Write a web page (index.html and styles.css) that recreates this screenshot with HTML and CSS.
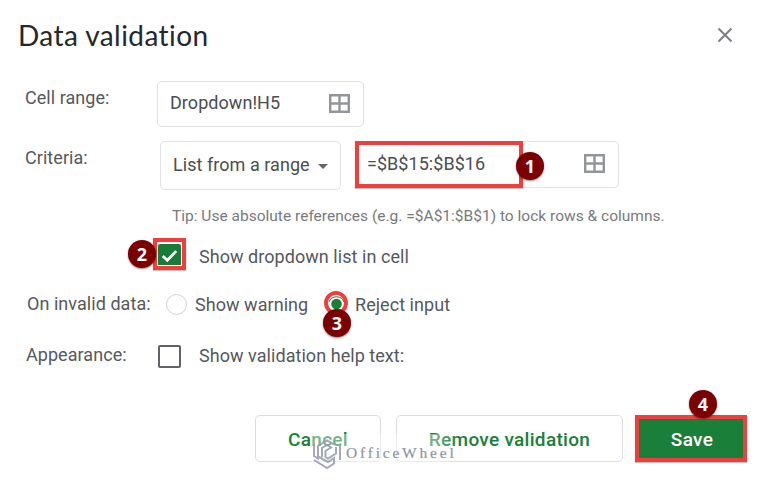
FILE: index.html
```html
<!DOCTYPE html>
<html lang="en">
<head>
<meta charset="utf-8">
<title>Data validation</title>
<link rel="stylesheet" href="styles.css">
</head>
<body>
<main class="dialog">
  <header class="header">
    <h1 class="title">Data validation</h1>
    <svg class="close" viewBox="0 0 16 16"><path d="M1.5 1.5 14.5 14.5M14.5 1.5 1.5 14.5"/></svg>
  </header>

  <section class="row row-range">
    <span class="label label-range">Cell range:</span>
    <div class="field field-range">
      <span class="text-range">Dropdown!H5</span>
      <svg class="grid-icon" viewBox="0 0 21 19"><path d="M1.2 1.2H19.8V17.8H1.2ZM10.5 1V18M1 9.5H20"/></svg>
    </div>
  </section>

  <section class="row row-criteria">
    <span class="label label-criteria">Criteria:</span>
    <div class="field field-select">
      <span class="text-select">List from a range</span>
      <svg class="caret" viewBox="0 0 10 5"><path d="M0 0H10L5 5Z"/></svg>
    </div>
    <div class="field field-formula">
      <span class="text-formula">=$B$15:$B$16</span>
      <svg class="grid-icon" viewBox="0 0 21 19"><path d="M1.2 1.2H19.8V17.8H1.2ZM10.5 1V18M1 9.5H20"/></svg>
      <span class="outline outline-formula"></span>
      <span class="badge badge-1">1</span>
    </div>
  </section>

  <p class="tip">Tip: Use absolute references (e.g. =$A$1:$B$1) to lock rows &amp; columns.</p>

  <section class="row row-show">
    <div class="check-frame">
      <svg class="check" viewBox="0 0 24 20"><path d="M5 11.5 9.7 16 19 6.5"/></svg>
      <span class="badge badge-2">2</span>
    </div>
    <span class="text-show">Show dropdown list in cell</span>
  </section>

  <section class="row row-invalid">
    <span class="label label-invalid">On invalid data:</span>
    <span class="radio"></span>
    <span class="text-warning">Show warning</span>
    <span class="radio-selected">
      <svg viewBox="0 0 24 24"><circle class="halo" cx="12" cy="12" r="10"/><path class="ring" d="M5 11A8 8 0 0 1 20 11"/><circle class="dot" cx="12.5" cy="13" r="5.3"/></svg>
      <span class="badge badge-3">3</span>
    </span>
    <span class="text-reject">Reject input</span>
  </section>

  <section class="row row-appearance">
    <span class="label label-appearance">Appearance:</span>
    <span class="box"></span>
    <span class="text-help">Show validation help text:</span>
  </section>

  <footer class="actions">
    <div class="button cancel"><span class="text-cancel">Cancel</span></div>
    <div class="button remove"><span class="text-remove">Remove validation</span></div>
    <div class="button save"><span class="text-save">Save</span><span class="badge badge-4">4</span></div>
    <div class="watermark">
      <svg viewBox="0 0 30 34"><path d="M2 9V21L6 23.5V11L15 5.5 23 10M10 22V13L15 10 19 12.5 13.5 16V22L16 23.5 24 18.5V12M28 10V25M2 25 15 33 22 28.5V23L16 27 6 21.5"/></svg>
      <span class="text-brand">OfficeWheel</span>
    </div>
  </footer>
</main>
</body>
</html>
```

FILE: styles.css
```css
* { box-sizing: border-box; }
body { margin: 0; background: #fff; }
.dialog {
  width: 767px;
  height: 491px;
  overflow: hidden;
  font-family: Roboto, sans-serif;
  font-size: 18px;
  line-height: 22px;
  letter-spacing: 0.05px;
  color: #55585c;
  white-space: nowrap;
}
.header {
  display: flex;
  justify-content: space-between;
  height: 81px;
  padding: 17px 34px 0 18px;
}
.title {
  margin: 0;
  font: 400 28px/36px Lato, sans-serif;
  letter-spacing: 0.42px;
  color: #24272b;
}
.close { width: 16px; height: 16px; margin-top: 10px; fill: none; stroke: #7b7e83; stroke-width: 2; }
.row { display: flex; }
.label { flex: none; }
.field {
  display: flex;
  flex: none;
  position: relative;
  align-items: center;
  justify-content: space-between;
  border: 1.5px solid #dfe1e5;
  border-radius: 5px;
  color: #4a4d51;
}
.grid-icon { width: 21px; height: 19px; fill: none; stroke: #929599; stroke-width: 2.4; }

.row-range { height: 60px; padding-left: 25px; }
.label-range { width: 132px; padding-top: 6px; }
.field-range { width: 207px; height: 46px; padding: 0 13px 2px 12px; }

.row-criteria { height: 64px; padding-left: 25px; }
.label-criteria { width: 135px; padding-top: 6px; }
.field-select { width: 181px; height: 49px; margin-right: 14px; padding: 0 12px 2px; }
.caret { width: 10px; height: 5px; margin-top: 3px; fill: #606368; }
.field-formula { width: 264px; height: 47px; padding: 0 13px 2px 11px; }
.outline-formula { position: absolute; left: -1px; top: -1px; width: 168px; height: 47px; border: 4px solid #ef3e3d; box-shadow: 0 1px 1px #8888; }

.badge {
  position: absolute;
  z-index: 2;
  width: 28px;
  height: 28px;
  border-radius: 50%;
  background: #7b0000;
  box-shadow: 0 1px 2px #0007;
  color: #fff;
  font: 700 18px/28px "Open Sans", sans-serif;
  letter-spacing: 0;
  text-align: center;
}
.badge-1 { left: 160px; top: 10px; }
.badge-2 { left: -29px; top: -2px; }
.badge-3 { left: 0; top: 20px; }
.badge-4 { left: 50px; top: -29px; }

.tip { height: 33px; margin: 0; padding: 1px 0 0 172px; font-size: 15.5px; line-height: 20px; letter-spacing: 0.01px; color: #77797d; }

.row-show { height: 51px; padding-left: 153px; }
.check-frame { position: relative; width: 33px; height: 32px; margin-right: 13px; padding: 2px 1px 0; border: 4px solid #ef3e3d; box-shadow: 0 1px 1px #8888; }
.check { display: block; width: 23px; height: 21px; border-radius: 2px 2px 0 0; background: #187b38; fill: none; stroke: #fff; stroke-width: 2.8; }
.text-show { padding-top: 8px; }

.row-invalid { height: 55px; padding-left: 27px; }
.label-invalid { width: 139px; padding-top: 4px; }
.radio { width: 21px; height: 21px; margin: 5px 8px 0 0; border: 1.5px solid #cfd1d4; border-radius: 50%; }
.text-warning { width: 128px; padding-top: 5px; }
.radio-selected { position: relative; width: 32px; }
.radio-selected svg { display: block; width: 24px; height: 24px; margin: 2px 0 0 1px; fill: none; }
.halo { stroke: #ef3e3d; stroke-width: 4; }
.ring { stroke: #34704a; stroke-width: 1; }
.dot { fill: #188038; }
.text-reject { padding-top: 5px; }

.row-appearance { height: 71px; padding-left: 26px; }
.label-appearance { width: 132px; }
.box { width: 23px; height: 23px; margin: 1px 18px 0 0; border: 2.5px solid #5f6368; border-radius: 2px; }
.text-help { padding-top: 1px; }

.actions { display: flex; position: relative; padding-left: 255px; color: #188038; font: 500 19px/47px Roboto, sans-serif; letter-spacing: 0.3px; text-align: center; }
.button { flex: none; position: relative; height: 47px; border: 1.5px solid #dadce3; border-radius: 5px; }
.cancel { width: 126px; margin-right: 15px; }
.remove { width: 227px; margin-right: 12px; }
.save { width: 112px; padding-left: 2px; border: 4px solid #ef3e3d; border-radius: 0; background: #1a8039; box-shadow: 0 1px 1px #8888; color: #fff; line-height: 41px; }
.watermark { display: flex; align-items: center; position: absolute; z-index: 3; left: 312px; top: 19px; width: 146px; height: 36px; background: linear-gradient(90deg, #fff6, #fff6 85%, #fff0); color: #8f93a5; }
.watermark svg { flex: none; width: 30px; height: 34px; margin-right: 4px; fill: none; stroke: #9599ac; stroke-width: 2; opacity: .85; }
.text-brand { padding-top: 1px; font: 400 15.5px/20px "Liberation Serif", serif; letter-spacing: 2.8px; -webkit-text-stroke: 0.2px #8f93a5; }
```
